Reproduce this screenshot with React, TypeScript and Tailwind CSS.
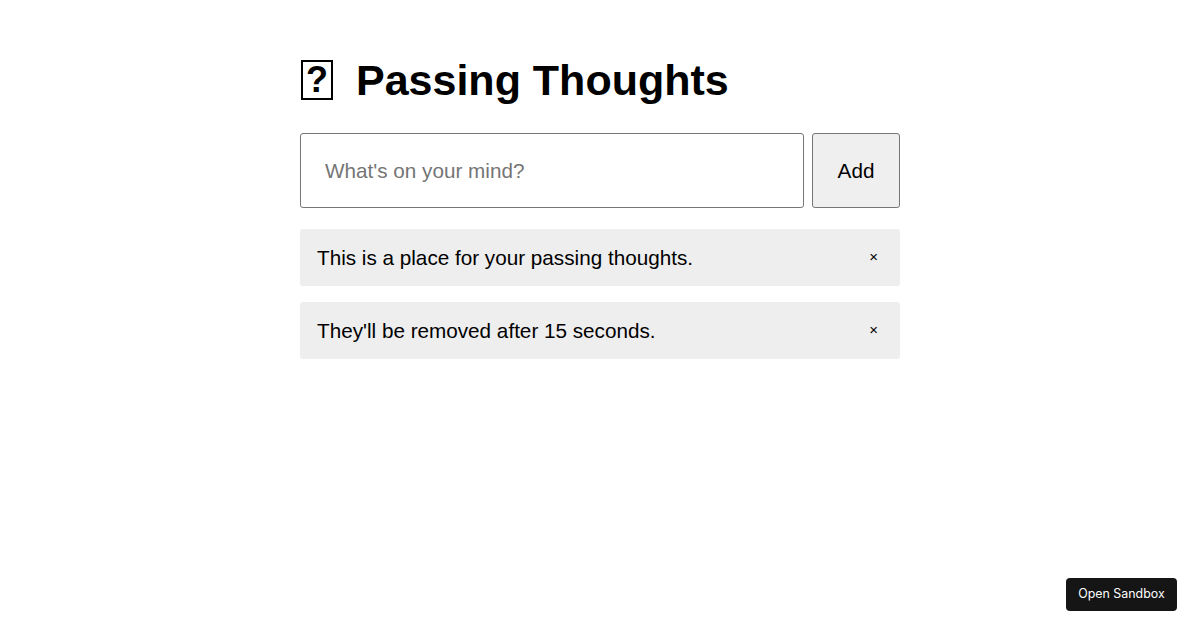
import { useState } from "react";

type Thought = { id: number; text: string };

export default function App() {
  const [thoughts, setThoughts] = useState<Thought[]>([
    { id: 1, text: "This is a place for your passing thoughts." },
    { id: 2, text: "They'll be removed after 15 seconds." },
  ]);
  const [draft, setDraft] = useState("");

  const add = () => {
    if (!draft.trim()) return;
    setThoughts([{ id: Date.now(), text: draft }, ...thoughts]);
    setDraft("");
  };

  return (
    <main className="min-h-screen bg-white font-['Liberation_Sans',Arial,sans-serif] text-black">
      <div className="mx-auto w-[600px] pt-[52px]">
        <h1 className="text-[43px] font-bold leading-[56px]">
          {/* missing-glyph box, as the emoji shows in the original */}
          <span className="mr-[23px] ml-px inline-block h-[40px] w-[32px] border-2 border-black text-center align-[3px] text-[36px] leading-[36px]">
            ?
          </span>
          Passing Thoughts
        </h1>
        <form
          className="mt-[25px] flex gap-2"
          onSubmit={(e) => {
            e.preventDefault();
            add();
          }}
        >
          <input
            value={draft}
            onChange={(e) => setDraft(e.target.value)}
            placeholder="What's on your mind?"
            className="h-[75px] flex-1 rounded-[3px] border border-[#767676] px-6 text-[20.7px] placeholder:text-[#757575] focus:outline-none"
          />
          <button
            type="submit"
            className="h-[75px] w-[88px] rounded-[3px] border border-[#767676] bg-[#efefef] text-[20.7px]"
          >
            Add
          </button>
        </form>
        <ul className="mt-[21px] flex flex-col gap-4">
          {thoughts.map((t) => (
            <li
              key={t.id}
              className="flex h-[57px] items-center justify-between rounded-[3px] bg-[#eeeeee] pl-[17px] pr-[22px] text-[20.7px]"
            >
              <span>{t.text}</span>
              <button
                className="text-[15px]"
                onClick={() => setThoughts(thoughts.filter((x) => x.id !== t.id))}
              >
                ×
              </button>
            </li>
          ))}
        </ul>
      </div>
      <button className="fixed bottom-[19px] right-[23px] h-[33px] w-[111px] rounded-[4px] bg-[#151515] font-['Inter',sans-serif] text-[12.4px] text-white">
        Open Sandbox
      </button>
    </main>
  );
}
